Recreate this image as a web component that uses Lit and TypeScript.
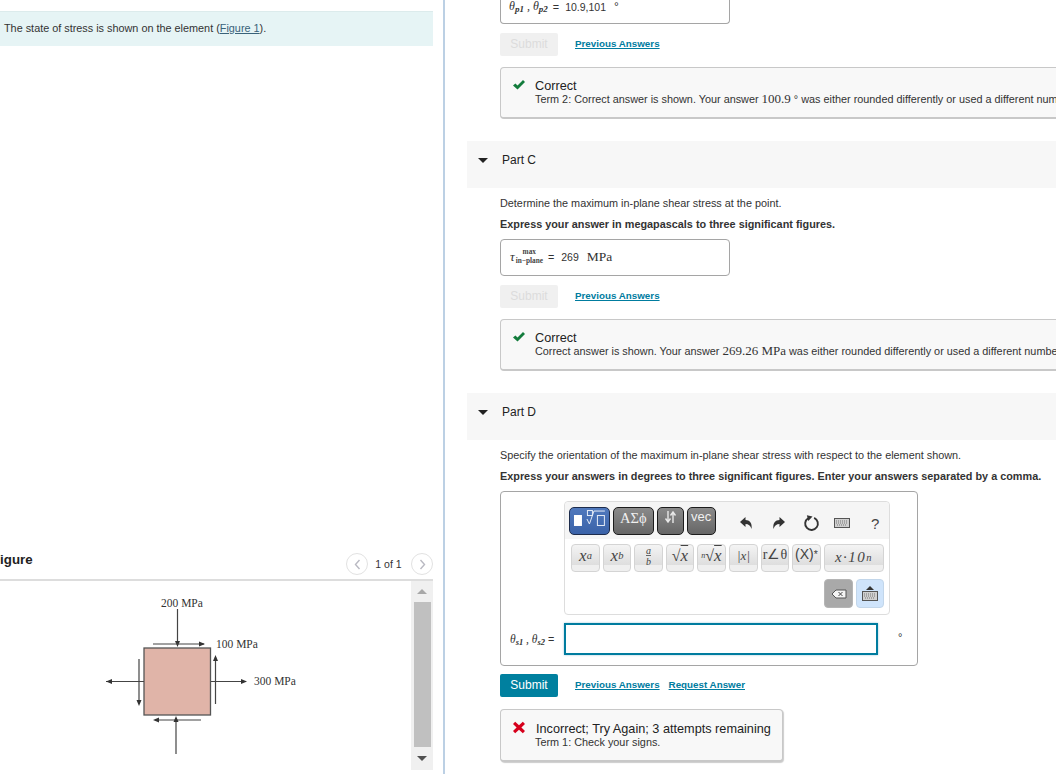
import { LitElement, html, css, svg } from "lit";
import { customElement } from "lit/decorators.js";

const check = html`<svg class="fi" width="14" height="12" viewBox="0 0 14 12"><path d="M1 6.5 L3.4 4.4 L5.5 6.6 L11 1 L13 3 L5.5 10.5 Z" fill="#137c3c"/></svg>`;
const cross = html`<svg class="fi" width="14" height="13" viewBox="0 0 14 13"><path d="M1 3 L3.2 .8 L7 4.2 L10.8 .8 L13 3 L9.4 6.5 L13 10 L10.8 12.2 L7 8.8 L3.2 12.2 L1 10 L4.6 6.5 Z" fill="#d6001c"/></svg>`;
const kb = (w = 16, h = 10) => html`<svg width=${w} height=${h} viewBox="0 0 16 10"><rect x=".5" y=".5" width="15" height="9" fill="#d0d0d0" stroke="#555"/><path d="M2 3h12M2 5h12M3 7h10" stroke="#777" stroke-width="1.2" stroke-dasharray="1 1"/></svg>`;

@customElement("app-root")
export class AppRoot extends LitElement {
  static styles = css`
    :host { display: flex; width: 1056px; height: 774px; overflow: hidden; background: #fff; font-family: "Liberation Sans", Arial, sans-serif; font-size: 10.85px; color: #333; }
    * { box-sizing: border-box; }
    .left { width: 445px; height: 774px; flex: none; border-right: 2px solid #bcd0e4; display: flex; flex-direction: column; padding-top: 11px; }
    .banner { width: 433px; height: 35px; flex: none; background: #e6f4f5; border-top: 1px solid #dcebec; display: flex; align-items: center; padding: 0 0 2px 4px; color: #333; }
    .banner a { color: #39627a; text-decoration: underline; }
    .link { color: #007c9f; text-decoration: underline; }
    .fighead { width: 433px; height: 46px; flex: none; margin-top: 489px; border-bottom: 2px solid #ddd; display: flex; align-items: center; padding-top: 14px; }
    .fighead b { margin: -9px 0 0 -8px; font-size: 13.3px; color: #222; flex: 1; }
    .pg { width: 22px; height: 22px; border-radius: 50%; border: 1px solid #e2e2e2; display: flex; align-items: center; justify-content: center; }
    .count { width: 43px; text-align: center; color: #333; font-size: 10.5px; margin-left: -1px; margin-right: 1px; }
    .figbody { display: flex; width: 433px; flex: 1; }
    .figure { width: 411px; height: 193px; flex: none; }
    .sb { width: 22px; height: 189px; background: #f0f0f0; display: flex; flex-direction: column; align-items: center; padding-top: 8px; }
    .sb i { display: block; width: 0; height: 0; border-left: 5px solid transparent; border-right: 5px solid transparent; }
    .sb .up { border-bottom: 5px solid #a8a8a8; }
    .sb .thumb { width: 17px; height: 145px; background: #c0c0c0; margin-top: 8px; }
    .sb .dn { border-top: 5px solid #505050; margin-top: 9px; }

    .right { flex: 1; min-width: 0; overflow: hidden; padding-left: 55px; height: 774px; }
    .ans { width: 230px; border: 1px solid #a5a5a5; border-radius: 4px; display: flex; align-items: center; padding-left: 8px; white-space: nowrap; background: #fff; }
    .ans.clip { height: 24px; border-top: none; border-radius: 0 0 4px 4px; padding-bottom: 10px; margin-bottom: 9px; }
    .ans.tall { height: 37px; margin-top: 7px; padding: 0 0 2px 9px; }
    .m { font-family: "Liberation Serif", serif; }
    .mi { font-family: "Liberation Serif", serif; font-style: italic; font-size: 12px; color: #333; }
    .mi sub { font-size: 9px; line-height: 0; vertical-align: -2px; font-weight: bold; }
    .eq { margin: 0 6px 0 5px; }
    .tall .eq { margin-right: 7px; }
    .val { font-size: 10.5px; }
    .actions { display: flex; align-items: center; height: 23px; margin-top: 9px; }
    .btn { width: 58px; height: 23px; border-radius: 2px; background: #f0f0f0; color: #dcdcdc; font-size: 12px; display: flex; align-items: center; justify-content: center; margin-right: 17px; padding-bottom: 1px; }
    .btn.on { background: #00809f; color: #fff; }
    .link { font-size: 9.8px; font-weight: bold; margin-right: 9px; margin-bottom: 2px; }
    .fb { position: relative; width: 700px; height: 52px; margin-top: 11px; background: #f8f8f8; border: 1px solid #c8c8c8; border-bottom: 2px solid #c8c8c8; border-radius: 4px; padding: 11px 0 0 34px; white-space: nowrap; line-height: 13px; }
    .fb.bad { width: 283px; height: 53px; margin-top: 12px; box-shadow: 1px 1px 1px #ccc; padding-top: 12px; }
    .fb .fi { position: absolute; left: 11px; top: 11px; }
    .fb.bad .t { margin-left: 1px; }
    .t { font-size: 12.7px; color: #222; display: block; line-height: 14px; }
    .d { font-size: 10.85px; color: #333; display: block; margin-top: -1px; }
    .bad .d { margin-top: 0; }
    .d .m { font-size: 13px; font-weight: normal; }
    .part { width: 600px; height: 47px; margin: 22px 0 0 -33px; background: #f7f7f7; display: flex; align-items: center; padding: 0 0 9px 11px; font-size: 12px; color: #222; }
    .part i { display: block; width: 0; height: 0; border-left: 5px solid transparent; border-right: 5px solid transparent; border-top: 5px solid #222; margin-right: 14px; }
    .p { line-height: 16px; white-space: nowrap; }
    .p.first { margin-top: 7px; }
    .p.second { margin-top: 5px; font-weight: bold; }
    .tau { display: inline-flex; align-items: center; }
    .tau .mi { font-size: 13px; }
    .stack { display: inline-flex; flex-direction: column; align-items: center; font: bold 7.3px/8.5px "Liberation Serif", serif; margin: 0 0 0 1px; color: #444; }
    .mpa { margin-left: 8px; font-size: 13.5px; }
    .big { width: 418px; height: 175px; margin-top: 7px; border: 1px solid #a5a5a5; border-radius: 4px; padding: 9px 0 0 0; }
    .panel { width: 326px; height: 114px; margin-left: 63px; border: 1px solid #ddd; border-radius: 4px; }
    .tools { height: 37px; background: #f5f5f5; display: flex; padding: 5px 0 0 4px; border-radius: 4px 4px 0 0; }
    .dark { height: 28px; margin-right: 3px; border: 1px solid #1c1c1c; border-radius: 5px; background: linear-gradient(#8a8a8a, #666); color: #f0f0f0; font: 14.5px "Liberation Serif", serif; display: flex; justify-content: center; padding-top: 2px; overflow: hidden; }
    .dark.blue { background: linear-gradient(#5079bd, #3a62a8); padding: 0; align-items: center; border-color: #1d2c4c; }
    .dark.vec { font: 13px "Liberation Sans", sans-serif; padding-top: 1px; }
    .ti { height: 32px; display: flex; align-items: center; justify-content: center; color: #444; font-size: 15px; }
    .keys { display: flex; gap: 3px; padding: 5px 0 0 6px; }
    .k { height: 28px; border: 1px solid #d4d4d4; border-radius: 4px; background: linear-gradient(#f4f4f4 0, #dedede 76%, #efefef 77%); color: #444; font: italic 17px "Liberation Serif", serif; display: flex; align-items: center; justify-content: center; padding-bottom: 5px; white-space: nowrap; }
    .k sup { font-size: 10.5px; line-height: 0; vertical-align: 6px; }
    .k sub { font-size: 10.5px; line-height: 0; vertical-align: -3px; }
    .k.rt { font-style: normal; font-size: 14px; padding-bottom: 8px; }
    .k.star { font: 14px "Liberation Sans", sans-serif; padding-bottom: 8px; }
    .k.abs { font-size: 13px; }
    .k.sci { font-size: 15px; letter-spacing: 1.5px; padding-bottom: 1px; }
    .k .rad { font-style: normal; font-size: 16px; }
    .k .ov { text-decoration: overline; }
    .k sup.nn { font-size: 8px; vertical-align: 7px; }
    .frac { display: flex; flex-direction: column; align-items: center; font-size: 10px; line-height: 9px; }
    .frac u { text-decoration: none; border-top: 1px solid #666; padding-top: 1px; }
    .keys2 { display: flex; justify-content: flex-end; gap: 3px; padding: 7px 5px 0 0; }
    .k2 { height: 29px; border-radius: 4px; display: flex; flex-direction: column; align-items: center; justify-content: center; }
    .k2.gray { width: 29px; background: #a9a9a9; border: 1px solid #b5b5b5; }
    .k2.blue { width: 28px; background: #cfe4fb; border: 1px solid #c2d6ea; gap: 1px; }
    .row { display: flex; align-items: center; margin-top: 8px; }
    .lab { width: 63px; padding-left: 9px; white-space: nowrap; }
    .lab .mi { font-size: 11.5px; }
    .lab .mi sub { font-size: 8.5px; }
    .input { width: 314px; height: 32px; border: 2px solid #007c9f; box-shadow: 0 0 2px #9cc8d8; background: #fff; }
    .deg { margin-left: 20px; font-size: 11px; margin-top: -4px; }
    .degtop { margin-left: 8px; font-size: 12px; }
  `;

  private fig() {
    const head = (x: number, y: number, dir: string) => {
      const p: Record<string, string> = {
        r: `${x},${y} ${x - 6},${y - 2.5} ${x - 6},${y + 2.5}`,
        l: `${x},${y} ${x + 6},${y - 2.5} ${x + 6},${y + 2.5}`,
        u: `${x},${y} ${x - 2.5},${y + 6} ${x + 2.5},${y + 6}`,
        d: `${x},${y} ${x - 2.5},${y - 6} ${x + 2.5},${y - 6}`,
      };
      return svg`<polygon points=${p[dir]} fill="#333"/>`;
    };
    const line = (x1: number, y1: number, x2: number, y2: number) =>
      svg`<line x1=${x1} y1=${y1} x2=${x2} y2=${y2} stroke="#444" stroke-width="1.2"/>`;
    return html`<svg class="figure" viewBox="0 581 411 193">
      <rect x="144" y="648" width="66.5" height="67" fill="#e0b4a8" stroke="#555" stroke-width="1.3"/>
      ${line(177.5, 609, 177.5, 645)}${head(177.5, 647, "d")}
      ${line(153, 644, 204, 644)}${head(205, 644, "r")}
      ${line(211, 681.5, 245, 681.5)}${head(247, 681.5, "r")}
      ${line(215.5, 704, 215.5, 657)}${head(215.5, 655, "u")}
      ${line(106, 681.5, 144, 681.5)}${head(106, 681.5, "l")}
      ${line(139, 659, 139, 704)}${head(139, 706, "d")}
      ${line(155, 720, 201, 720)}${head(153, 720, "l")}
      ${line(176, 754, 176, 718)}${head(176, 716, "u")}
      <g font-family="Liberation Serif, serif" font-size="11.5" fill="#333">
        <text x="161" y="607">200 MPa</text>
        <text x="216" y="648">100 MPa</text>
        <text x="254" y="685">300 MPa</text>
      </g>
    </svg>`;
  }

  private toolbar() {
    return html`<div class="panel">
      <div class="tools">
        <div class="dark blue" style="width:41px">
          <svg width="39" height="26" viewBox="0 0 39 26">
            <rect x="4" y="7" width="8" height="11" fill="#fff"/>
            <rect x="17.5" y="2.5" width="5" height="5" fill="none" stroke="#e4ebf6"/>
            <path d="M17 11 L19.5 16 L24 3 H35" fill="none" stroke="#e4ebf6"/>
            <rect x="27.5" y="7.5" width="7" height="10" fill="none" stroke="#e4ebf6"/>
          </svg>
        </div>
        <div class="dark" style="width:41px">ΑΣϕ</div>
        <div class="dark" style="width:27px">
          <svg width="13" height="15" viewBox="0 0 13 15"><path d="M4 1v10M1.5 8.5L4 12l2.5-3.5M9 13V3M6.5 5.5L9 2l2.5 3.5" fill="none" stroke="#e8e8e8" stroke-width="1.4"/></svg>
        </div>
        <div class="dark vec" style="width:29px">vec</div>
        <div style="width:11px"></div>
        <div class="ti" style="width:33px"><svg width="14" height="14" viewBox="0 0 14 14"><path d="M1 6 L6.5 1 V4 C10.5 4 13.5 7 12.5 13 C11.5 9.5 9.5 8 6.5 8 V11 Z" fill="#333"/></svg></div>
        <div class="ti" style="width:33px"><svg width="14" height="14" viewBox="0 0 14 14"><path d="M13 6 L7.5 1 V4 C3.5 4 .5 7 1.5 13 C2.5 9.5 4.5 8 7.5 8 V11 Z" fill="#333"/></svg></div>
        <div class="ti" style="width:32px"><svg width="17" height="18" viewBox="0 0 16 17"><path d="M10.5 3.6 A6 6 0 1 1 4.8 4" fill="none" stroke="#333" stroke-width="1.8"/><path d="M4 .8 L9 3 L4.4 6.5 Z" fill="#333" transform="rotate(-10 6 3)"/></svg></div>
        <div class="ti" style="width:30px">${kb()}</div>
        <div class="ti" style="width:32px;padding-left:4px">?</div>
      </div>
      <div class="keys">
        <div class="k" style="width:29px">x<sup>a</sup></div>
        <div class="k" style="width:28px">x<sub>b</sub></div>
        <div class="k" style="width:29px"><span class="frac"><span>a</span><u>b</u></span></div>
        <div class="k" style="width:28px"><span class="rad">√</span><span class="ov">x</span></div>
        <div class="k" style="width:29px"><sup class="nn">n</sup><span class="rad">√</span><span class="ov">x</span></div>
        <div class="k abs" style="width:29px">|x|</div>
        <div class="k rt" style="width:28px">r∠θ</div>
        <div class="k star" style="width:29px">(X)<sup>*</sup></div>
        <div class="k sci" style="width:60px">x·10<sup>n</sup></div>
      </div>
      <div class="keys2">
        <div class="k2 gray"><svg width="16" height="10" viewBox="0 0 16 10"><path d="M1 5 L5 1 H15 V9 H5 Z" fill="#f4f4f4" stroke="#555"/><path d="M7.5 3l4 4M11.5 3l-4 4" stroke="#444"/></svg></div>
        <div class="k2 blue"><svg width="8" height="4" viewBox="0 0 8 4"><path d="M0 4L4 0l4 4z" fill="#333"/></svg>${kb()}</div>
      </div>
    </div>`;
  }

  render() {
    return html`
      <section class="left">
        <div class="banner"><span>The state of stress is shown on the element (<a>Figure 1</a>).</span></div>
        <div class="fighead">
          <b>Figure</b>
          <div class="pg"><svg width="7" height="11" viewBox="0 0 7 11"><path d="M5.5 1L1.5 5.5 5.5 10" fill="none" stroke="#b9b9c2" stroke-width="1.4"/></svg></div>
          <span class="count">1 of 1</span>
          <div class="pg"><svg width="7" height="11" viewBox="0 0 7 11"><path d="M1.5 1L5.5 5.5 1.5 10" fill="none" stroke="#b9b9c2" stroke-width="1.4"/></svg></div>
        </div>
        <div class="figbody">
          ${this.fig()}
          <div class="sb"><i class="up"></i><div class="thumb"></div><i class="dn"></i></div>
        </div>
      </section>
      <section class="right">
        <div class="ans clip">
          <span class="mi">θ<sub>p1</sub> , θ<sub>p2</sub></span><span class="eq">=</span><span class="val">10.9,101</span><span class="degtop">°</span>
        </div>
        <div class="actions" style="margin-top:0"><span class="btn">Submit</span><a class="link">Previous Answers</a></div>
        <div class="fb">${check}<span class="t">Correct</span><span class="d">Term 2: Correct answer is shown. Your answer <span class="m">100.9</span> ° was either rounded differently or used a different number of significant figures than required for this part.</span></div>

        <div class="part"><i></i>Part C</div>
        <div class="p first">Determine the maximum in-plane shear stress at the point.</div>
        <div class="p second">Express your answer in megapascals to three significant figures.</div>
        <div class="ans tall">
          <span class="tau"><span class="mi">τ</span><span class="stack"><span>max</span><span>in−plane</span></span></span><span class="eq">=</span><span class="val">269</span><span class="m mpa">MPa</span>
        </div>
        <div class="actions"><span class="btn">Submit</span><a class="link">Previous Answers</a></div>
        <div class="fb">${check}<span class="t">Correct</span><span class="d">Correct answer is shown. Your answer <span class="m">269.26 MPa</span> was either rounded differently or used a different number of significant figures than required for this part.</span></div>

        <div class="part"><i></i>Part D</div>
        <div class="p first">Specify the orientation of the maximum in-plane shear stress with respect to the element shown.</div>
        <div class="p second">Express your answers in degrees to three significant figures. Enter your answers separated by a comma.</div>
        <div class="big">
          ${this.toolbar()}
          <div class="row">
            <div class="lab"><span class="mi">θ<sub>s1</sub> , θ<sub>s2</sub></span> =</div>
            <div class="input"></div>
            <span class="deg">°</span>
          </div>
        </div>
        <div class="actions" style="margin-top:8px"><span class="btn on">Submit</span><a class="link">Previous Answers</a><a class="link">Request Answer</a></div>
        <div class="fb bad">${cross}<span class="t">Incorrect; Try Again; 3 attempts remaining</span><span class="d">Term 1: Check your signs.</span></div>
      </section>
    `;
  }
}
